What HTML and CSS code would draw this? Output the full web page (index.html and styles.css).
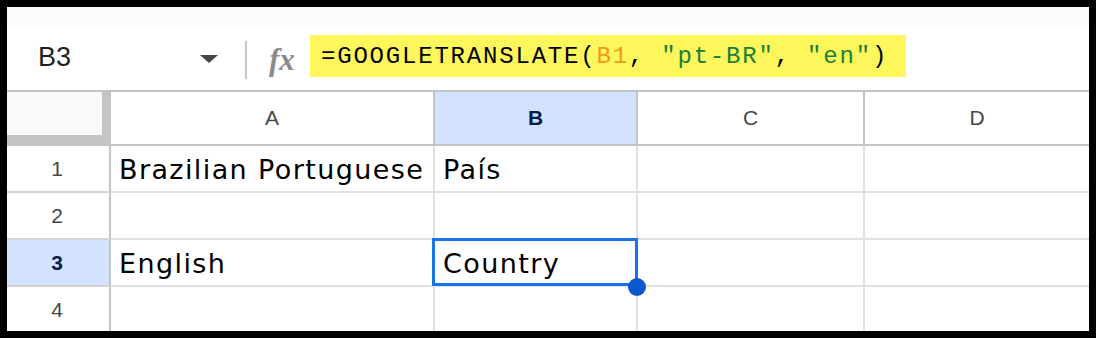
FILE: index.html
```html
<!DOCTYPE html>
<html lang="en">
  <head>
    <meta charset="UTF-8" />
    <title>GOOGLETRANSLATE example</title>
    <link rel="stylesheet" href="styles.css">
  </head>
  <body>
    <div class="frame">
      <div class="topstrip"></div>

      <div class="toolbar">
        <div class="namebox">
          <span class="cellref">B3</span>
          <span class="caret"></span>
        </div>
        <span class="divider"></span>
        <span class="fx">fx</span>
        <div class="formula">=GOOGLETRANSLATE(<span class="ref">B1</span>, <span class="str">"pt-BR"</span>, <span class="str">"en"</span>)</div>
      </div>

      <div class="sheet">
        <div class="corner"></div>
        <div class="colhead">A</div>
        <div class="colhead active">B</div>
        <div class="colhead">C</div>
        <div class="colhead last">D</div>

        <div class="rowhead">1</div>
        <div class="cell">Brazilian Portuguese</div>
        <div class="cell">País</div>
        <div class="cell"></div>
        <div class="cell last"></div>

        <div class="rowhead">2</div>
        <div class="cell"></div>
        <div class="cell"></div>
        <div class="cell"></div>
        <div class="cell last"></div>

        <div class="rowhead active">3</div>
        <div class="cell">English</div>
        <div class="cell selected">
          Country
          <span class="selection"></span>
          <span class="handle"></span>
        </div>
        <div class="cell"></div>
        <div class="cell last"></div>

        <div class="rowhead">4</div>
        <div class="cell"></div>
        <div class="cell"></div>
        <div class="cell"></div>
        <div class="cell last"></div>
      </div>
    </div>
  </body>
</html>
```

FILE: styles.css
```css
* {
  box-sizing: border-box;
}
html,
body {
  margin: 0;
  background: #000;
}
.frame {
  width: 1096px;
  height: 338px;
  border: 7px solid #000;
  background: #fff;
  display: flex;
  flex-direction: column;
  overflow: hidden;
}
.topstrip {
  height: 20px;
  background-color: #f9fbfd;
}
.toolbar {
  height: 63px;
  display: flex;
  align-items: center;
  background: #fff;
}
.namebox {
  width: 211px;
  display: flex;
  align-items: center;
  padding-left: 31px;
}
.cellref {
  flex: 1;
  font-family: "Liberation Sans", Arial, sans-serif;
  font-size: 27px;
  color: #1f1f1f;
  margin-top: -2px;
}
.caret {
  width: 0;
  height: 0;
  border-left: 9px solid transparent;
  border-right: 9px solid transparent;
  border-top: 8px solid #444746;
  margin-top: 1px;
}
.divider {
  width: 2px;
  height: 38px;
  margin-left: 27px;
  margin-top: 3px;
  background-color: #c7c7c7;
}
.fx {
  margin-left: 22px;
  width: 41px;
  font-family: "Liberation Serif", "Times New Roman", serif;
  font-style: italic;
  font-weight: bold;
  font-size: 31px;
  color: #8a8a8a;
  margin-top: 2px;
}
.formula {
  width: 596px;
  height: 42px;
  margin-bottom: 5px;
  padding-left: 11px;
  display: flex;
  align-items: center;
  background-color: #fdf75b;
  font-family: "Liberation Mono", "Courier New", monospace;
  font-size: 24px;
  letter-spacing: 1.8px;
  color: #000;
  white-space: pre;
}
.formula .ref {
  color: #f09a1a;
}
.formula .str {
  color: #188038;
}
.sheet {
  flex: 1;
  overflow: hidden;
  border-top: 2px solid #c4c4c4;
  display: grid;
  grid-template-columns: 104px 324px 203px 227px 1fr;
  grid-template-rows: 54px repeat(4, 47px);
}
.corner {
  background-color: #f8f9fa;
  border-right: 9px solid #c4c4c4;
  border-bottom: 11px solid #c4c4c4;
}
.colhead {
  display: flex;
  align-items: center;
  justify-content: center;
  border-right: 2px solid #c4c4c4;
  border-bottom: 2px solid #c4c4c4;
  font-family: "Liberation Sans", Arial, sans-serif;
  font-size: 21px;
  color: #444746;
}
.colhead.active {
  background-color: #d3e3fd;
  color: #041e49;
  font-weight: bold;
}
.rowhead {
  display: flex;
  align-items: center;
  justify-content: center;
  border-right: 2px solid #c4c4c4;
  border-bottom: 2px solid #d4d4d4;
  font-family: "Liberation Sans", Arial, sans-serif;
  font-size: 21px;
  color: #444746;
  padding-right: 2px;
}
.rowhead.active {
  background-color: #d3e3fd;
  color: #041e49;
  font-weight: bold;
}
.cell {
  display: flex;
  align-items: center;
  padding-left: 8px;
  padding-top: 2px;
  border-right: 2px solid #e1e1e1;
  border-bottom: 2px solid #e1e1e1;
  font-family: "DejaVu Sans", Verdana, sans-serif;
  font-size: 27px;
  letter-spacing: 1.4px;
  color: #000;
  white-space: nowrap;
}
.colhead.last,
.cell.last {
  border-right: none;
}
.cell.selected {
  position: relative;
}
.selection {
  position: absolute;
  left: -3px;
  top: -2px;
  width: 206px;
  height: 48px;
  border: 3px solid #1a73e8;
}
.handle {
  position: absolute;
  left: 193px;
  top: 38px;
  width: 18px;
  height: 18px;
  border-radius: 50%;
  background-color: #0b57d0;
}
```
